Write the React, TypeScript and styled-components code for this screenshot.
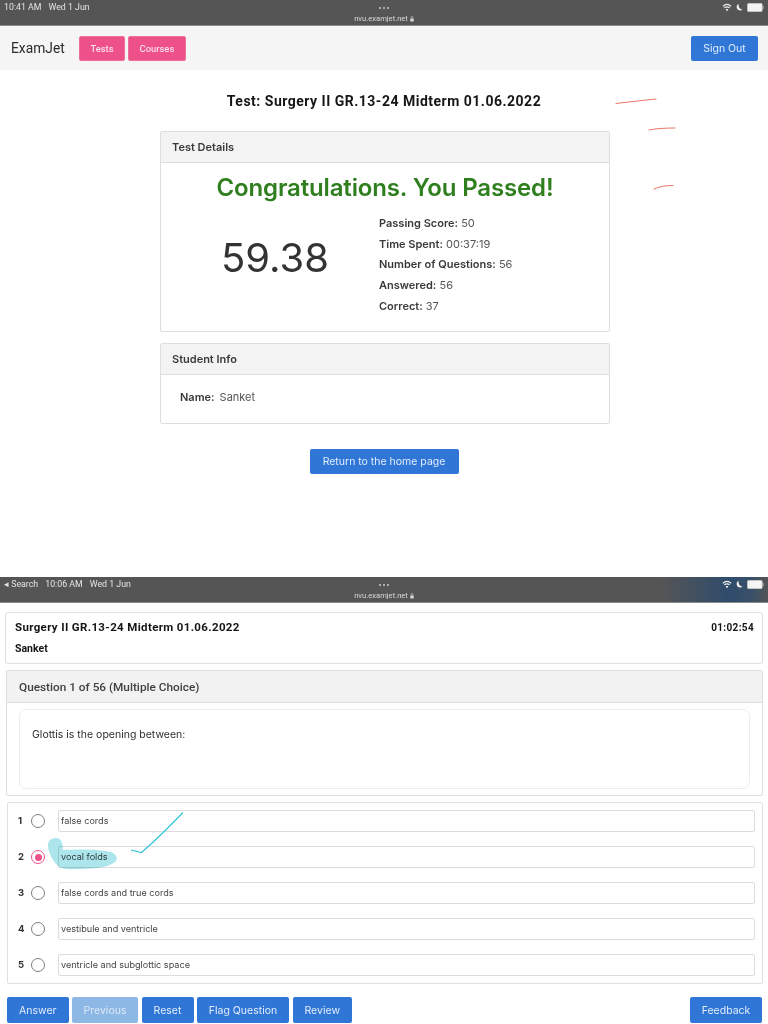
import React from 'react';
import styled, { createGlobalStyle } from 'styled-components';

const GlobalStyle = createGlobalStyle`
  html, body {
    margin: 0;
    padding: 0;
    background: #fff;
  }
  * {
    box-sizing: border-box;
  }
`;

const Page = styled.div`
  position: relative;
  width: 768px;
  height: 1024px;
  overflow: hidden;
  background: #fff;
  font-family: Inter, "Liberation Sans", sans-serif;
  color: #333;
`;

const Screen = styled.section<{ $height: number }>`
  height: ${(p) => p.$height}px;
  display: flex;
  flex-direction: column;
`;

const StatusBar = styled.div<{ $tinted?: boolean }>`
  flex: none;
  height: 26px;
  display: grid;
  grid-template-columns: 1fr auto 1fr;
  padding: 0 4px;
  color: #e4e4e4;
  font-family: Roboto, sans-serif;
  font-size: 8.8px;
  background: ${(p) =>
    p.$tinted ? 'linear-gradient(90deg, #555 86%, #2f4c6c 95%, #3a5068 98%, #555 100%)' : '#555'};
  border-bottom: 1px solid #8a8a8a;
`;

const StatusLeft = styled.div`
  display: flex;
  gap: 7px;
  padding-top: 2px;
  line-height: 10px;
`;

const StatusCenter = styled.div`
  display: flex;
  flex-direction: column;
  align-items: center;
  padding-top: 5px;
`;

const Dots = styled.div`
  display: flex;
  gap: 2px;
  height: 8px;

  span {
    width: 2px;
    height: 2px;
    margin-top: 2px;
    border-radius: 50%;
    background: #c9c9c9;
  }
`;

const Address = styled.div`
  display: flex;
  align-items: center;
  gap: 2px;
  font-size: 7.6px;
  line-height: 11px;
  color: #d8d8d8;
`;

const StatusRight = styled.div`
  display: flex;
  justify-content: flex-end;
  align-items: flex-start;
  gap: 4px;
  padding-top: 3px;
`;

const NavBar = styled.nav`
  flex: none;
  height: 44px;
  display: flex;
  align-items: center;
  padding: 0 10px 0 11px;
  background: #f5f5f5;
`;

const Brand = styled.div`
  width: 68px;
  font-family: Roboto, sans-serif;
  font-size: 13.8px;
  color: #2b2b2b;
`;

const NavButton = styled.button`
  height: 25px;
  margin-right: 3px;
  padding: 0 10.5px;
  border: 1px solid #ee6f98;
  border-radius: 2px;
  background: #ee5189;
  color: #fbdde8;
  font-family: Roboto, sans-serif;
  font-size: 9.4px;
  font-weight: 500;
`;

const Spacer = styled.div`
  flex: 1;
`;

const Button = styled.button<{ $width: number; $muted?: boolean }>`
  width: ${(p) => p.$width}px;
  height: 25px;
  padding: 0;
  border: 0;
  border-radius: 2px;
  background: ${(p) => (p.$muted ? '#8db8e6' : '#2f76d6')};
  color: ${(p) => (p.$muted ? '#dbe8f7' : '#e2edfa')};
  font-family: Inter, sans-serif;
  font-size: 10.5px;
`;

const Heading = styled.h1`
  margin: 23px 0 22px;
  font-family: Roboto, sans-serif;
  font-size: 14px;
  line-height: 16px;
  font-weight: 700;
  letter-spacing: 0.5px;
  text-align: center;
  color: #161616;
`;

const Card = styled.div`
  width: 450px;
  margin: 0 0 11px 160px;
  border: 1px solid #dedede;
  border-radius: 2px;
`;

const CardHeader = styled.div`
  height: 31px;
  padding-left: 11px;
  display: flex;
  align-items: center;
  background: #f3f3f3;
  border-bottom: 1px solid #dcdcdc;
  font-size: 11px;
  font-weight: 600;
  color: #3a3a3a;
`;

const Congrats = styled.div`
  margin-top: 10px;
  height: 30px;
  font-size: 24px;
  line-height: 30px;
  font-weight: 600;
  letter-spacing: -0.15px;
  text-align: center;
  color: #2f7f1f;
`;

const ResultRow = styled.div`
  display: flex;
  margin-top: 10px;
  height: 118px;
`;

const Score = styled.div`
  width: 218px;
  padding: 20px 0 0 10px;
  font-size: 40px;
  line-height: 50px;
  text-align: center;
  color: #333;
`;

const Facts = styled.div`
  padding-top: 0;
`;

const Fact = styled.div`
  height: 20.7px;
  font-size: 11px;
  line-height: 20px;
  color: #555;

  b {
    font-weight: 600;
    color: #3a3a3a;
  }
`;

const StudentBody = styled.div`
  height: 48px;
  padding: 12px 0 0 19px;
  font-size: 11px;
  line-height: 20px;
  color: #555;

  b {
    font-weight: 600;
    color: #3a3a3a;
    margin-right: 5px;
  }
`;

const CenterRow = styled.div`
  display: flex;
  justify-content: center;
  margin-top: 14px;
`;

const ExamCard = styled.div`
  margin: 9px 5px 0 5px;
  height: 52px;
  padding: 6px 8px 0 9px;
  border: 1px solid #e0e0e0;
  border-radius: 3px;
  font-family: Roboto, sans-serif;
  font-weight: 700;
  color: #151515;
`;

const ExamTitleRow = styled.div`
  display: flex;
  justify-content: space-between;
  height: 21px;
  font-size: 11.5px;
  line-height: 17px;
  letter-spacing: 0.35px;

  span:last-child {
    font-size: 10px;
  }
`;

const ExamStudent = styled.div`
  font-size: 10.5px;
  line-height: 17px;
`;

const QuestionCard = styled.div`
  margin: 6px 5px 0 6px;
  height: 126px;
  border: 1px solid #dedede;
  border-radius: 2px;
`;

const QuestionHeader = styled.div`
  height: 32px;
  padding-left: 12px;
  display: flex;
  align-items: center;
  background: #f2f2f2;
  border-bottom: 1px solid #dedede;
  font-family: Roboto, sans-serif;
  font-size: 11.8px;
  font-weight: 500;
  color: #404040;
`;

const QuestionBody = styled.div`
  height: 80px;
  margin: 6px 12px 0 12px;
  padding: 14px 12px;
  border: 1px solid #ececec;
  border-radius: 7px;
  font-size: 10.5px;
  line-height: 22px;
  color: #2e2e2e;
`;

const OptionsCard = styled.div`
  margin: 6px 5px 0 7px;
  height: 182px;
  padding: 7px 7px 0 10px;
  display: flex;
  flex-direction: column;
  gap: 14px;
  border: 1px solid #e0e0e0;
  border-radius: 2px;
`;

const OptionRow = styled.div`
  display: flex;
  align-items: center;
  height: 22px;
`;

const OptionNumber = styled.div`
  width: 13px;
  padding-bottom: 1px;
  font-size: 9.5px;
  font-weight: 700;
  color: #333;
`;

const Radio = styled.span<{ $checked?: boolean }>`
  flex: none;
  width: 14px;
  height: 14px;
  margin-right: 13px;
  display: flex;
  align-items: center;
  justify-content: center;
  border-radius: 50%;
  border: 1.5px solid ${(p) => (p.$checked ? '#ee5189' : '#7d7d7d')};

  &::after {
    content: '';
    display: ${(p) => (p.$checked ? 'block' : 'none')};
    width: 7px;
    height: 7px;
    border-radius: 50%;
    background: #ee5189;
  }
`;

const OptionText = styled.div`
  flex: 1;
  height: 22px;
  padding-left: 2px;
  border: 1px solid #dcdcdc;
  border-radius: 2px;
  font-size: 9.1px;
  line-height: 19px;
  color: #444;
`;

const ButtonBar = styled.div`
  margin: 13px 6px 0 7px;
  display: flex;
  gap: 3.5px;

  ${Button} {
    height: 26px;
  }
`;

const Scribbles = styled.svg`
  position: absolute;
  left: 0;
  top: 0;
  width: 768px;
  height: 1024px;
  pointer-events: none;
`;

const Highlight = styled.path`
  fill: #ace6ec;
  mix-blend-mode: multiply;
`;

const facts = [
  ['Passing Score:', '50'],
  ['Time Spent:', '00:37:19'],
  ['Number of Questions:', '56'],
  ['Answered:', '56'],
  ['Correct:', '37'],
];

const options = [
  'false cords',
  'vocal folds',
  'false cords and true cords',
  'vestibule and ventricle',
  'ventricle and subglottic space',
];

const StatusIcons = () => (
  <StatusRight>
    <svg width="10" height="9" viewBox="0 0 12 10" fill="none" stroke="#f0f0f0" strokeWidth="1.4">
      <path d="M1 3.600C4 .9 8 .9 11 3.600" />
      <path d="M2.800 5.500C4.800 3.800 7.200 3.800 9.200 5.500" />
      <path d="M6 9.400 4.400 7.400C5.400 6.700 6.600 6.700 7.600 7.400Z" fill="#f0f0f0" stroke="none" />
    </svg>
    <svg width="7" height="9" viewBox="0 0 8 10">
      <path d="M3 .8C1.300 1.600.6 3.200.8 5c.3 2.200 2.200 3.700 4.200 3.500 1-.1 1.800-.5 2.400-1.200C5 7.500 2.500 5 3 .8Z" fill="#f0f0f0" />
    </svg>
    <svg width="17" height="9" viewBox="0 0 17 9">
      <rect x="0.300" y="0.300" width="15" height="8.400" rx="1.500" fill="#f4f4f4" stroke="#bbb" strokeWidth="0.6" />
      <rect x="15.700" y="3" width="1" height="3" fill="#aaa" />
    </svg>
  </StatusRight>
);

const Status = ({ left, tinted }: { left: string[]; tinted?: boolean }) => (
  <StatusBar $tinted={tinted}>
    <StatusLeft>
      {left.map((item) => (
        <span key={item}>{item}</span>
      ))}
    </StatusLeft>
    <StatusCenter>
      <Dots>
        <span />
        <span />
        <span />
      </Dots>
      <Address>
        nvu.examjet.net
        <svg width="4" height="6" viewBox="0 0 4 6">
          <path d="M1 2.500V1.500a1 1 0 0 1 2 0v1" fill="none" stroke="#d8d8d8" strokeWidth="0.6" />
          <rect x="0.300" y="2.500" width="3.400" height="3" fill="#d8d8d8" />
        </svg>
      </Address>
    </StatusCenter>
    <StatusIcons />
  </StatusBar>
);

const App = () => (
  <Page>
    <GlobalStyle />
    <Screen $height={577}>
      <Status left={['10:41 AM', 'Wed 1 Jun']} />
      <NavBar>
        <Brand>ExamJet</Brand>
        <NavButton>Tests</NavButton>
        <NavButton>Courses</NavButton>
        <Spacer />
        <Button $width={67}>Sign Out</Button>
      </NavBar>
      <Heading>Test: Surgery II GR.13-24 Midterm 01.06.2022</Heading>
      <Card>
        <CardHeader>Test Details</CardHeader>
        <Congrats>Congratulations. You Passed!</Congrats>
        <ResultRow>
          <Score>59.38</Score>
          <Facts>
            {facts.map(([label, value]) => (
              <Fact key={label}>
                <b>{label}</b> {value}
              </Fact>
            ))}
          </Facts>
        </ResultRow>
      </Card>
      <Card>
        <CardHeader>Student Info</CardHeader>
        <StudentBody>
          <b>Name:</b>Sanket
        </StudentBody>
      </Card>
      <CenterRow>
        <Button $width={149}>Return to the home page</Button>
      </CenterRow>
    </Screen>
    <Screen $height={447}>
      <Status left={['◂ Search', '10:06 AM', 'Wed 1 Jun']} tinted />
      <ExamCard>
        <ExamTitleRow>
          <span>Surgery II GR.13-24 Midterm 01.06.2022</span>
          <span>01:02:54</span>
        </ExamTitleRow>
        <ExamStudent>Sanket</ExamStudent>
      </ExamCard>
      <QuestionCard>
        <QuestionHeader>Question 1 of 56 (Multiple Choice)</QuestionHeader>
        <QuestionBody>Glottis is the opening between:</QuestionBody>
      </QuestionCard>
      <OptionsCard>
        {options.map((text, i) => (
          <OptionRow key={text}>
            <OptionNumber>{i + 1}</OptionNumber>
            <Radio $checked={i === 1} />
            <OptionText>{text}</OptionText>
          </OptionRow>
        ))}
      </OptionsCard>
      <ButtonBar>
        <Button $width={61.5}>Answer</Button>
        <Button $width={66} $muted>
          Previous
        </Button>
        <Button $width={52}>Reset</Button>
        <Button $width={92}>Flag Question</Button>
        <Button $width={59.5}>Review</Button>
        <Spacer />
        <Button $width={72}>Feedback</Button>
      </ButtonBar>
    </Screen>
    <Scribbles viewBox="0 0 768 1024">
      <g fill="none" stroke="#ee7464" strokeWidth="1" strokeLinecap="round">
        <path d="M616 103.500C628 102 642 100.500 656 99" />
        <path d="M649 130C656 128.500 666 128 675 128" />
        <path d="M654 189C659 186.500 666 185.500 673 185.500" />
      </g>
      <Highlight d="M48 845C48 840 52 838 56 838C61 838 63 842 63 850C78 849 100 849 111 852C116 854 118 858 116 861C112 866 98 869 80 869C68 870 60 869 57 865C52 860 48 852 48 845Z" />
      <path d="M183 812.500C170 826 156 840 141.500 852.500L131 850" fill="none" stroke="#35c4dc" strokeWidth="1.200" />
    </Scribbles>
  </Page>
);

export default App;
